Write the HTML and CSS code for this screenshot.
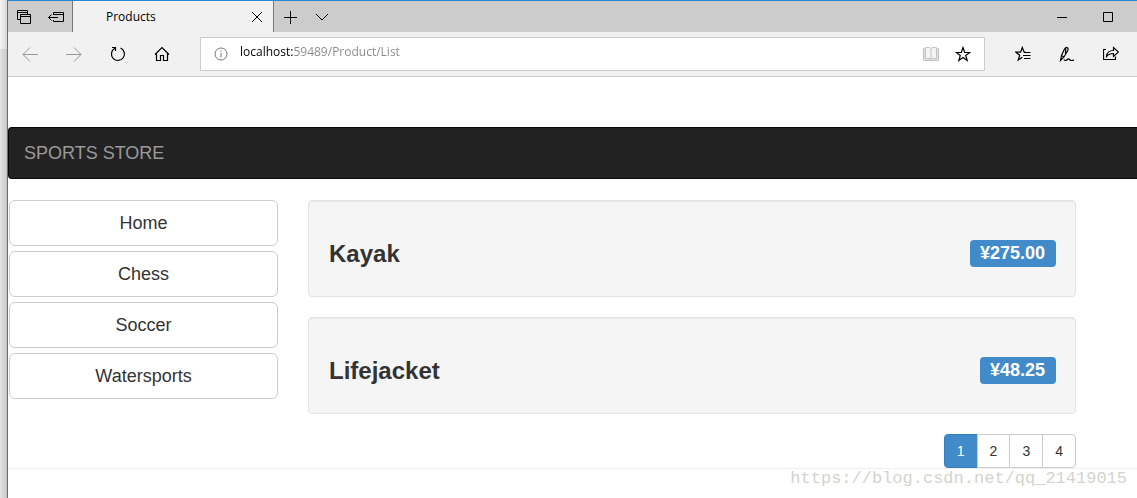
FILE: index.html
```
<!DOCTYPE html>
<html lang="en">
<head>
    <meta charset="UTF-8">
    <meta name="viewport" content="width=device-width, initial-scale=1.0">
    <title>Products</title>
    <link rel="stylesheet" href="styles.css">
</head>
<body>

    <div class="desktop-edge"></div>

    <div class="window">
        <!-- Tab strip -->
        <div class="tab-bar">
            <div class="tab-tools">
                <button class="icon-button" type="button" aria-label="Tabs you've set aside">
                    <svg width="16" height="16" viewBox="0 0 16 16"><path d="M4 10.500H1.500V1.500H11.500V5M1.500 3.500H11.500M4.500 5.500H14.500V14.500H4.500ZM4.500 7.500H14.500"/></svg>
                </button>
                <button class="icon-button" type="button" aria-label="Set these tabs aside">
                    <svg width="16" height="16" viewBox="0 0 16 16"><path d="M5.500 6V3.500H15.500V12.500H5.500V11M5.500 5.500H15.500M0.500 8.500H10M3.500 5.500L0.500 8.500L3.500 11.500"/></svg>
                </button>
            </div>
            <div class="tab">
                <span class="tab-title">Products</span>
                <button class="icon-button" type="button" aria-label="Close tab">
                    <svg width="16" height="16" viewBox="0 0 16 16"><path d="M3 3L13 13M13 3L3 13"/></svg>
                </button>
            </div>
            <div class="tab-actions">
                <button class="icon-button" type="button" aria-label="New tab">
                    <svg width="16" height="16" viewBox="0 0 16 16"><path d="M8.500 2V15M2 8.500H15"/></svg>
                </button>
                <button class="icon-button" type="button" aria-label="Show tab previews">
                    <svg width="16" height="16" viewBox="0 0 16 16"><path d="M2 5L8 11L14 5"/></svg>
                </button>
            </div>
            <div class="window-controls">
                <button class="icon-button" type="button" aria-label="Minimize">
                    <svg width="16" height="16" viewBox="0 0 16 16"><path d="M3 8.500H13"/></svg>
                </button>
                <button class="icon-button" type="button" aria-label="Maximize">
                    <svg width="16" height="16" viewBox="0 0 16 16"><path d="M3.500 3.500H12.500V12.500H3.500Z"/></svg>
                </button>
            </div>
        </div>

        <!-- Address bar -->
        <div class="toolbar">
            <div class="toolbar-nav">
                <button class="icon-button disabled" type="button" aria-label="Back" disabled>
                    <svg width="16" height="16" viewBox="0 0 16 16"><path d="M16 8.500H1M8 1.500L1 8.500L8 15.500"/></svg>
                </button>
                <button class="icon-button disabled" type="button" aria-label="Forward" disabled>
                    <svg width="16" height="16" viewBox="0 0 16 16"><path d="M0 8.500H15M8 1.500L15 8.500L8 15.500"/></svg>
                </button>
                <button class="icon-button" type="button" aria-label="Refresh">
                    <svg width="16" height="16" viewBox="0 0 16 16"><path class="thick" d="M10.500 2A6.500 6.500 0 1 1 4.800 2.300M2 1.500H5.500V5"/></svg>
                </button>
                <button class="icon-button" type="button" aria-label="Home">
                    <svg width="16" height="16" viewBox="0 0 16 16"><path class="thick" d="M1 8.500L8 1.500L15 8.500M2.500 7.500V14.500H6.500V9.500H9.500V14.500H13.500V7.500"/></svg>
                </button>
            </div>
            <div class="address">
                <svg class="info-icon" width="14" height="14" viewBox="0 0 14 14"><path d="M7 1A6 6 0 1 1 7 13A6 6 0 1 1 7 1M7 3.500V4.700M7 6V10.500"/></svg>
                <input class="address-input" type="text" aria-label="Address" value="localhost:59489/Product/List">
                <button class="icon-button faint" type="button" aria-label="Reading view">
                    <svg width="16" height="16" viewBox="0 0 16 16"><path class="cover" d="M0.500 2.500H15.500V14.500H0.500Z"/><path class="paper" d="M8 2.500L6.500 1.500H2.500V12.500H6.500L8 13.500L9.500 12.500H13.500V1.500H9.500ZM8 2.500V13.500"/></svg>
                </button>
                <button class="icon-button" type="button" aria-label="Add to favorites">
                    <svg width="16" height="16" viewBox="0 0 16 16"><path class="thick" d="M8 1.500L9.700 6.500H14.700L10.700 9.500L12.200 14.500L8 11.500L3.800 14.500L5.300 9.500L1.300 6.500H6.300Z"/></svg>
                </button>
            </div>
            <div class="toolbar-actions">
                <button class="icon-button" type="button" aria-label="Hub">
                    <svg width="16" height="16" viewBox="0 0 16 16"><path class="thick" d="M10.500 6H9L7.300 1.500L5.600 6.200H0.800L4.700 9.300L3.200 14L7.300 11.300"/><path class="thick" d="M9 6.500H15.500M8 9.500H15.500M9 12.500H15.500"/></svg>
                </button>
                <button class="icon-button" type="button" aria-label="Make a web note">
                    <svg width="16" height="16" viewBox="0 0 16 16"><path class="thick" d="M1.500 14.500L2.500 9.500L5.500 3Q7 0.800 8.500 1.700Q9.700 2.700 8.500 5L5 11ZM2.500 9.500L5 11M6.800 1.500L6.500 8M5 13.500C6 15.500 8 14 9 13Q10 12.500 11 14Q12 15 15 14"/></svg>
                </button>
                <button class="icon-button" type="button" aria-label="Share">
                    <svg width="16" height="16" viewBox="0 0 16 16"><path class="thick" d="M3 3.500H0.500V13.500H12.500V10.500M3.500 10.500Q4 4.500 10.500 4.500V1.500L15.500 6L10.500 10.500V7.500Q6 7.500 3.500 10.500Z"/></svg>
                </button>
            </div>
        </div>

        <!-- Store page -->
        <div class="page">
            <nav class="navbar">
                <a class="navbar-brand" href="#">SPORTS STORE</a>
            </nav>

            <div class="content">
                <nav class="categories" aria-label="Categories">
                    <a class="btn" href="#">Home</a>
                    <a class="btn" href="#">Chess</a>
                    <a class="btn" href="#">Soccer</a>
                    <a class="btn" href="#">Watersports</a>
                </nav>

                <main class="products">
                    <div class="well">
                        <h3 class="product-name">Kayak</h3>
                        <span class="label">¥275.00</span>
                    </div>
                    <div class="well">
                        <h3 class="product-name">Lifejacket</h3>
                        <span class="label">¥48.25</span>
                    </div>
                    <nav class="pager" aria-label="Pages">
                        <a class="page-link selected" href="#">1</a>
                        <a class="page-link" href="#">2</a>
                        <a class="page-link" href="#">3</a>
                        <a class="page-link" href="#">4</a>
                    </nav>
                </main>
            </div>

            <footer class="footer">https://blog.csdn.net/qq_21419015</footer>
        </div>
    </div>

</body>
</html>
```

FILE: styles.css
```
* {
    box-sizing: border-box;
}

body {
    display: flex;
    min-height: 100vh;
    margin: 0;
    background-color: white;
    color: #333;
    font-family: "Liberation Sans", Arial, sans-serif;
    font-size: 14px;
    line-height: 20px;
}

/* Strip of the window behind this one */
.desktop-edge {
    width: 7px;
    background: linear-gradient(to right, transparent, rgba(0, 0, 0, 0.12)),
        linear-gradient(#f6f6f6 49px, #e3e3e3 49px);
}

.window {
    flex: 1;
    min-width: 0;
    border-top: 1px solid #2b88d0;
    border-left: 1px solid #2b7cc0;
}

/* Browser chrome */
.tab-bar, .toolbar {
    display: flex;
    align-items: center;
    font-family: "Open Sans", "Noto Sans", sans-serif;
    font-size: 12px;
}

.tab-bar {
    height: 31px;
    background-color: #ccc;
}

.icon-button {
    display: flex;
    padding: 0;
    border: none;
    background: none;
    color: black;
    cursor: pointer;
}

.icon-button.disabled {
    color: #999;
}

.icon-button.faint {
    color: #c4c4c4;
}

svg {
    flex: none;
    fill: none;
    stroke: currentColor;
    stroke-width: 1;
}

.thick {
    stroke-width: 1.2;
}

.cover {
    fill: #e0e0e0;
}

.paper {
    fill: #f4f4f4;
}

.tab-tools {
    display: flex;
    gap: 16px;
    padding: 0 8px;
}

.tab {
    display: flex;
    align-items: center;
    justify-content: space-between;
    width: 202px;
    height: 31px;
    padding: 0 8px 0 33px;
    border-left: 1px solid #777;
    border-right: 1px solid #777;
    background-color: #f1f1f1;
    color: black;
}

.tab-actions {
    display: flex;
    gap: 16px;
    padding-left: 8px;
}

.window-controls {
    display: flex;
    gap: 30px;
    margin-left: auto;
    padding-right: 21px;
}

.toolbar {
    height: 45px;
    border-bottom: 1px solid #ccc;
    background-color: #f1f1f1;
}

.toolbar-nav, .toolbar-actions {
    display: flex;
    gap: 28px;
    padding: 0 30px 0 14px;
}

.toolbar-actions {
    padding: 0 18px 0 30px;
}

.address {
    display: flex;
    flex: 1;
    align-items: center;
    gap: 16px;
    height: 34px;
    padding: 0 13px;
    border: 1px solid #ccc;
    background-color: white;
}

.info-icon {
    color: #777;
}

/* Host name in black, rest of the address in grey */
.address-input {
    flex: 1;
    min-width: 0;
    height: 20px;
    margin: 0 0 4px -4px;
    padding: 0;
    border: none;
    background: linear-gradient(to right, black 54px, #888 54px);
    -webkit-background-clip: text;
    background-clip: text;
    color: transparent;
    font: inherit;
}

/* Store page */
.page {
    padding-top: 50px;
}

.navbar {
    padding: 15px;
    border: 1px solid #080808;
    border-right: none;
    border-radius: 4px 0 0 4px;
    background-color: #222;
}

.navbar-brand {
    display: block;
    color: #999;
    font-size: 18px;
    text-decoration: none;
}

.content {
    display: flex;
    gap: 30px;
    padding: 21px 61px 0 1px;
}

.categories {
    display: flex;
    flex: 0 0 269px;
    flex-direction: column;
    gap: 5px;
}

.btn {
    padding: 10px 16px;
    border: 1px solid #ccc;
    border-radius: 6px;
    color: #333;
    font-size: 18px;
    line-height: 24px;
    text-align: center;
    text-decoration: none;
}

.products {
    flex: 1;
}

.well {
    display: flex;
    align-items: center;
    justify-content: space-between;
    margin-bottom: 20px;
    padding: 39px 19px 29px 20px;
    border: 1px solid #e3e3e3;
    border-radius: 4px;
    background-color: #f5f5f5;
    box-shadow: inset 0 1px 1px rgba(0, 0, 0, 0.05);
}

.product-name {
    margin: 0;
    font-size: 24px;
    line-height: 27px;
}

.label {
    padding: 0 11px 0 10px;
    border-radius: 4px;
    background-color: #428bca;
    color: white;
    font-size: 18px;
    font-weight: bold;
    line-height: 27px;
}

.pager {
    display: flex;
    justify-content: flex-end;
}

.page-link {
    margin-left: -1px;
    padding: 6px 12px;
    border: 1px solid #ccc;
    color: #333;
    text-decoration: none;
}

.page-link:first-child {
    border-radius: 4px 0 0 4px;
}

.page-link:last-child {
    border-radius: 0 4px 4px 0;
}

.page-link.selected {
    border-color: #357ebd;
    background-color: #428bca;
    color: white;
}

.footer {
    padding-right: 10px;
    border-top: 1px solid #f0f0f0;
    color: #d4d4cc;
    font-family: "Liberation Mono", monospace;
    font-size: 17px;
    text-align: right;
}
```
